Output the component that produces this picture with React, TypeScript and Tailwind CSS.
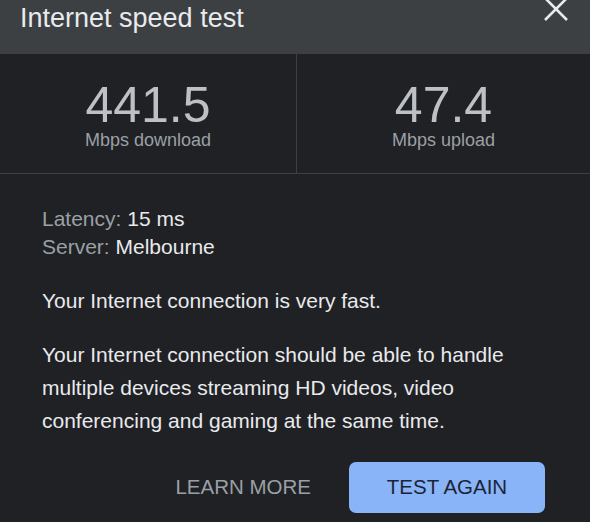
import React from "react";

export default function App() {
  return (
    <div className="relative w-[590px] h-[522px] overflow-hidden bg-[#202124] font-['Liberation_Sans',Arial,sans-serif]">
      <header className="h-[54px] bg-[#3c4043] pl-[20px] pt-[2px]">
        <h1 className="text-[27px] leading-[32px] text-[#e8eaed] font-normal">Internet speed test</h1>
      </header>
      <button aria-label="Close" className="absolute left-[544px] top-[-3px] w-[24px] h-[24px]">
        <svg viewBox="0 0 24 24" width="24" height="24">
          <path d="M1 1 L23 23 M23 1 L1 23" stroke="#e8eaed" strokeWidth="2.6" fill="none" />
        </svg>
      </button>
      <div className="grid grid-cols-[296px_1px_1fr] border-b border-[#3c4043]">
        <div className="flex flex-col items-center pt-[26px] pb-[23px]">
          <div className="text-[50px] leading-[50px] text-[#bdc1c6]">441.5</div>
          <div className="text-[18px] leading-[20px] text-[#9aa0a6]">Mbps download</div>
        </div>
        <div className="bg-[#3c4043]" />
        <div className="flex flex-col items-center pt-[26px] pb-[23px]">
          <div className="text-[50px] leading-[50px] text-[#bdc1c6]">47.4</div>
          <div className="text-[18px] leading-[20px] text-[#9aa0a6]">Mbps upload</div>
        </div>
      </div>
      <div className="pl-[42px] pr-[42px] pt-[31px] text-[21px] text-[#e8eaed]">
        <div className="leading-[28px]">
          <div>
            <span className="text-[#9aa0a6]">Latency:</span> 15 ms
          </div>
          <div>
            <span className="text-[#9aa0a6]">Server:</span> Melbourne
          </div>
        </div>
        <p className="mt-[23px] leading-[33px]">Your Internet connection is very fast.</p>
        <p className="mt-[21px] leading-[33px]">
          Your Internet connection should be able to handle multiple devices streaming HD videos, video conferencing and gaming at the same time.
        </p>
      </div>
      <div className="flex justify-end items-center gap-[38px] pr-[45px] mt-[25px]">
        <button className="text-[20.5px] text-[#9aa0a6] leading-none">LEARN MORE</button>
        <button className="w-[196px] h-[51px] rounded-[7px] bg-[#8ab4f8] text-[20.5px] text-[#1b2436] leading-none">
          TEST AGAIN
        </button>
      </div>
    </div>
  );
}
